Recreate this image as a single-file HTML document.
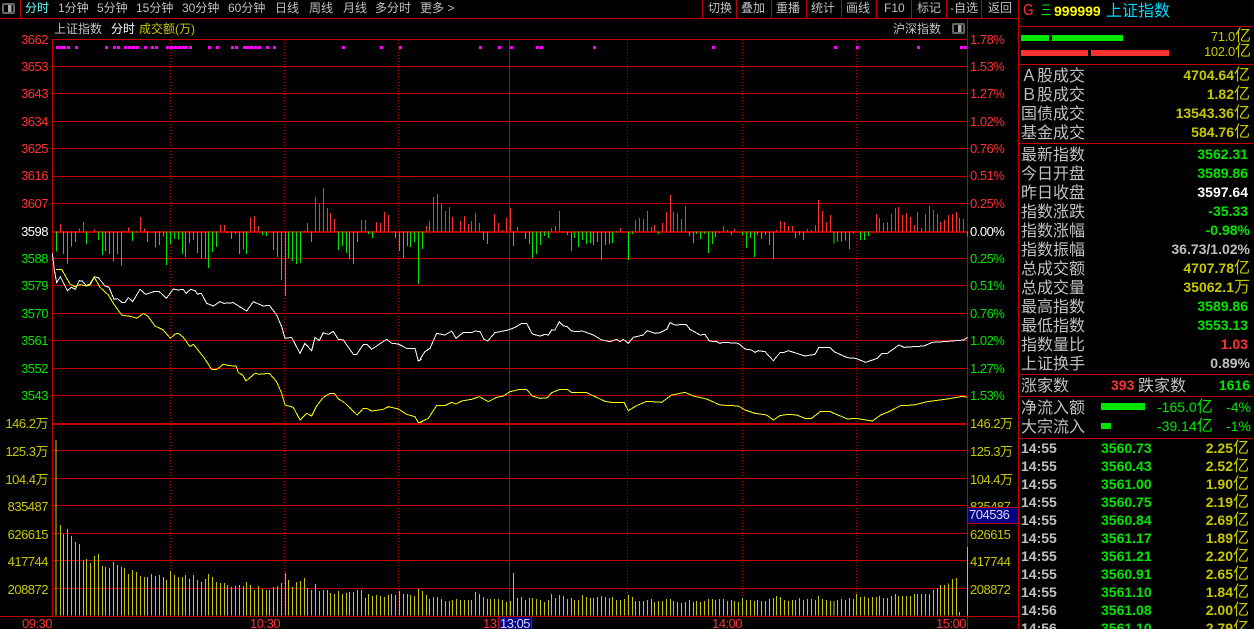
<!DOCTYPE html>
<html><head><meta charset="utf-8"><style>
html,body{margin:0;padding:0;background:#000;width:1254px;height:629px;overflow:hidden}
body{position:relative;font-family:"Liberation Sans","WenQuanYi Zen Hei","Noto Sans CJK SC",sans-serif;font-size:12px}
svg{position:absolute;left:0;top:0}
.t{position:absolute;white-space:nowrap;line-height:16px;height:16px}
.g{color:#c0c0c0}.r{color:#ff3232}.n{color:#00e600}.w{color:#fff}.o{color:#c8c800}
.l{font-size:16px;color:#c0c0c0;left:1021px;letter-spacing:0;margin-top:2px}
.v{font-size:14px;font-weight:bold;right:4px}
.v i{font-style:normal;font-weight:normal;font-size:16px}
.ax{left:0;width:48px;text-align:right;font-size:13px;letter-spacing:-.5px}
.ay{left:970px;font-size:13px;letter-spacing:-.5px}
.tm{font-size:13px;letter-spacing:-.5px}
.tk{font-size:14px;font-weight:bold;left:1021px;color:#c0c0c0}
.tp{font-size:14px;font-weight:bold;left:1101px;color:#00e600}
.tv{font-size:14px;font-weight:bold;right:5px;color:#c8c800}
.tv i{font-style:normal;font-weight:normal;font-size:16px}
.b{position:absolute}
.ic{position:absolute;width:9px;height:7px;border:2px solid #666;border-radius:2px;background:linear-gradient(90deg,#000 45%,#aaa 45%,#aaa 85%,#000 85%)}
</style></head><body>
<svg width="1254" height="629" viewBox="0 0 1254 629" shape-rendering="crispEdges" fill="none">
<path stroke="#c00000" d="M0 18.5H1018M52 39.5H967M52 66.5H967M52 93.5H967M52 121.5H967M52 148.5H967M52 176.5H967M52 203.5H967M52 258.5H967M52 285.5H967M52 313.5H967M52 340.5H967M52 368.5H967M52 395.5H967M52 450.5H967M52 478.5H967M52 505.5H967M52 533.5H967M52 560.5H967M52 588.5H967M0 616.5H1018M1018 26.5H1254M1018 64.5H1254M1018 143.5H1254M1018 374.5H1254M1018 396.5H1254M1018 438.5H1254"/>
<path stroke="#c00000" stroke-width="2" d="M52 232H967M52 424H967"/>
<path stroke="#c00000" d="M20.5 0V18M702.5 0V18M736.5 0V18M771.5 0V18M806.5 0V18M841.5 0V18M876.5 0V18M911.5 0V18M946.5 0V18M981.5 0V18M52.5 39V616M967.5 18V629M1018.5 0V629M509.5 39V616"/>
<path stroke="#c00000" stroke-dasharray="1 2" d="M170.5 40V616M284.5 40V616M398.5 40V616M627.5 40V616M742.5 40V616M856.5 40V616"/>
<path stroke="#f0f" stroke-width="3" d="M56 47.5h3M60 47.5h3M63 47.5h3M67 47.5h3M75 47.5h3M105 47.5h3M113 47.5h3M117 47.5h3M124 47.5h3M128 47.5h3M132 47.5h3M136 47.5h3M144 47.5h3M151 47.5h3M155 47.5h3M166 47.5h3M170 47.5h3M174 47.5h3M178 47.5h3M182 47.5h3M185 47.5h3M189 47.5h3M208 47.5h3M216 47.5h3M231 47.5h3M235 47.5h3M243 47.5h3M246 47.5h3M250 47.5h3M254 47.5h3M258 47.5h3M266 47.5h3M273 47.5h3M342 47.5h3M380 47.5h3M399 47.5h3M479 47.5h3M498 47.5h3M510 47.5h3M536 47.5h3M540 47.5h3M593 47.5h3M712 47.5h3M834 47.5h3M856 47.5h3M917 47.5h3M960 47.5h3M964 47.5h3"/>

<g transform="translate(0 200) scale(.33333)" stroke-width="3">
<path stroke="#ff3232" d="M181 95V72M238 95V85M250 95V66M283 95V88M373 95V92M385 95V82M421 95V51M433 95V85M661 95V75M673 95V75M751 95V54M763 95V48M775 95V78M913 95V91M922 95V69M946 95V-9M958 95V12M970 95V-36M982 95V24M991 95V39M1003 95V57M1084 95V60M1096 95V60M1129 95V66M1141 95V69M1153 95V36M1165 95V45"/>
<path stroke="#00e600" d="M169 95V155M190 95V162M202 95V192M214 95V140M226 95V126M259 95V132M295 95V120M307 95V165M316 95V153M328 95V162M340 95V185M352 95V162M364 95V197M397 95V123M409 95V98M442 95V126M466 95V143M478 95V135M490 95V110M499 95V195M511 95V132M523 95V115M535 95V118M547 95V162M556 95V171M568 95V129M580 95V120M592 95V159M604 95V177M616 95V175M626 95V204M637 95V156M649 95V141M683 95V98M695 95V117M706 95V102M718 95V162M730 95V147M739 95V162M787 95V105M799 95V108M820 95V150M832 95V171M844 95V240M856 95V288M865 95V174M877 95V183M889 95V192M901 95V189M934 95V126M1015 95V150M1027 95V138M1039 95V159M1048 95V177M1060 95V192M1072 95V126M1105 95V102M1117 95V114M1176 95V98M1187 95V114M1198 95V153M1210 95V174M1222 95V138M1231 95V141M1243 95V126M1255 95V252"/>
<polyline stroke="#fff" points="157,160 163,210 170,248 181,230 202,272 214,262 226,268 238,242 247,243 259,257 270,252 283,230 295,233 315,258 327,262 342,298 352,296 366,307 375,307 385,293 398,305 420,268 437,283 465,274 478,275 499,295 520,267 535,270 550,268 558,280 572,268 585,272 592,282 604,280 620,310 640,318 660,305 672,310 700,308 740,333 760,305 790,318 808,316 830,345 845,380 855,415 875,412 900,460 915,430 935,452 945,412 958,422 970,398 985,403 1000,394 1015,418 1030,420 1060,463 1070,463 1090,433 1100,433 1115,448 1160,418 1175,430 1195,432 1220,445 1245,445 1255,483 1265,478"/>
<polyline stroke="#ff0" points="168,208 185,208 210,252 225,260 240,254 260,258 270,255 283,232 300,262 325,285 340,310 365,345 395,350 410,355 430,340 445,350 465,378 490,390 511,415 525,402 535,400 550,412 570,440 580,433 610,470 635,508 650,508 670,493 690,497 708,498 715,518 728,525 738,543 765,520 778,523 808,520 830,545 845,580 855,615 880,622 900,660 920,640 935,648 950,618 970,592 990,580 1003,580 1015,597 1030,605 1072,645 1090,625 1100,625 1115,633 1150,628 1165,620 1195,627 1220,643 1245,650 1255,668 1265,667"/>
</g>

<g transform="translate(420 200) scale(.33333)" stroke-width="3">
<path stroke="#ff3232" d="M19 95V78M28 95V63M40 95V-9M52 95V-18M64 95V12M76 95V33M88 95V21M97 95V51M121 95V63M133 95V48M145 95V72M154 95V63M166 95V39M178 95V69M223 95V42M235 95V69M247 95V90M259 95V54M271 95V24M292 95V81M394 95V84M406 95V78M418 95V33M601 95V84M646 95V60M658 95V54M670 95V57M682 95V33M694 95V81M703 95V75M727 95V69M739 95V36M751 95V-15M760 95V36M772 95V39M784 95V57M796 95V18M910 95V78M922 95V90M943 95V87M1069 95V90M1081 95V63M1093 95V66M1105 95V78M1117 95V78M1162 95V87M1174 95V90M1186 95V75M1195 95V0M1207 95V33M1219 95V66M1231 95V45"/>
<path stroke="#00e600" d="M7 95V147M190 95V120M202 95V132M281 95V138M304 95V98M316 95V117M328 95V132M338 95V174M349 95V162M361 95V135M373 95V108M385 95V114M430 95V98M442 95V105M454 95V153M463 95V114M475 95V141M487 95V120M499 95V132M511 95V129M520 95V135M532 95V126M544 95V180M556 95V135M568 95V132M577 95V129M589 95V98M625 95V180M637 95V102M715 95V102M808 95V108M820 95V129M829 95V102M841 95V117M853 95V102M865 95V159M877 95V132M886 95V111M898 95V98M934 95V105M967 95V105M979 95V144M991 95V114M1003 95V171M1012 95V105M1024 95V117M1036 95V105M1048 95V135M1060 95V177M1126 95V114M1138 95V105M1150 95V120"/>
<polyline stroke="#fff" points="0,478 15,455 30,445 50,400 75,405 95,393 108,415 130,397 155,398 165,393 180,395 192,418 203,423 225,398 245,394 265,390 285,382 305,370 320,370 337,402 360,408 375,403 385,405 395,390 405,390 418,365 430,378 442,380 455,393 470,395 487,393 520,405 545,420 570,425 590,418 600,425 610,418 625,430 640,412 670,405 682,392 705,400 720,398 740,388 750,368 765,375 798,373 810,388 840,405 855,403 868,423 890,425 900,430 910,427 955,430 975,447 995,450 1005,457 1015,452 1035,455 1060,482 1080,458 1090,458 1105,452 1155,468 1185,463 1197,442 1230,442 1242,455"/>
<polyline stroke="#ff0" points="0,667 25,655 50,617 75,617 95,607 108,612 125,603 155,598 178,590 205,605 230,592 250,588 270,575 300,568 320,568 337,588 360,595 382,593 395,578 420,568 442,568 455,578 500,578 540,597 555,604 580,608 612,607 625,632 650,617 680,604 725,607 755,585 795,577 820,588 860,597 900,615 955,618 975,630 1005,640 1040,645 1060,660 1080,647 1105,643 1130,645 1155,655 1175,655 1200,635 1230,634 1242,640"/>
</g>

<g transform="translate(834 200) scale(.33333)" stroke-width="3">
<path stroke="#00e600" d="M0 95V130M10 95V125M22 95V125M34 95V122M46 95V147M58 95V100M79 95V120M91 95V120M103 95V108M400 95V110"/>
<path stroke="#ff3232" d="M127 95V42M136 95V54M148 95V69M160 95V66M172 95V42M184 95V24M193 95V21M205 95V45M217 95V39M229 95V51M241 95V75M250 95V36M262 95V84M274 95V42M286 95V18M298 95V30M310 95V42M319 95V66M331 95V60M343 95V45M355 95V42M367 95V36M376 95V54M388 95V57"/>
<polyline stroke="#fff" points="0,455 40,473 65,475 95,487 130,475 145,460 160,460 195,435 210,442 270,438 295,427 330,425 390,420 400,412"/>
<polyline stroke="#ff0" points="0,640 40,657 65,655 115,663 140,645 165,635 200,617 240,615 280,605 340,597 385,589 400,592"/>
</g>

<g transform="translate(0 420) scale(.33333)" stroke-width="3" stroke="#c8c800">
<path d="M168 587V60M181 587V315M190 587V342M202 587V327M214 587V348M226 587V366M238 587V372M250 587V421M259 587V417M271 587V429M283 587V408M295 587V402M307 587V438M316 587V441M328 587V444M340 587V426M352 587V435M364 587V441M373 587V444M385 587V462M397 587V450M409 587V456M421 587V468M433 587V471M442 587V471M454 587V462M466 587V468M478 587V465M490 587V471M499 587V480M511 587V453M523 587V465M535 587V471M547 587V471M556 587V465M568 587V477M580 587V465M592 587V480M604 587V486M616 587V477M626 587V462M637 587V471M649 587V486M661 587V489M673 587V489M683 587V495M695 587V501M706 587V498M718 587V495M730 587V498M739 587V486M751 587V495M763 587V510M775 587V498M787 587V507M799 587V510M808 587V510M820 587V501M832 587V498M844 587V489M856 587V459M865 587V480M877 587V501M889 587V486M901 587V483M913 587V474M922 587V504M934 587V510M946 587V492M958 587V513M970 587V510M982 587V510M991 587V519M1003 587V522M1015 587V513M1027 587V522M1039 587V519M1048 587V516M1060 587V516M1072 587V510M1084 587V510M1096 587V534M1105 587V522M1117 587V528M1129 587V525M1141 587V528M1153 587V531M1165 587V525M1174 587V522M1186 587V525M1198 587V513M1210 587V522M1222 587V522M1231 587V525M1243 587V528M1255 587V507"/>
</g>
<g transform="translate(420 420) scale(.33333)" stroke-width="3" stroke="#c8c800">
<path d="M7 587V513M19 587V525M28 587V537M40 587V531M52 587V531M64 587V537M76 587V543M88 587V543M97 587V540M109 587V537M121 587V540M133 587V540M145 587V540M154 587V540M166 587V516M178 587V522M190 587V531M202 587V537M211 587V537M223 587V537M235 587V537M247 587V540M259 587V546M271 587V543M281 587V459M292 587V534M304 587V531M316 587V540M328 587V534M338 587V534M349 587V537M361 587V540M373 587V546M385 587V540M394 587V522M406 587V534M418 587V525M430 587V528M442 587V537M454 587V534M463 587V540M475 587V540M487 587V525M499 587V531M511 587V534M520 587V534M532 587V531M544 587V528M556 587V531M568 587V534M577 587V531M589 587V540M601 587V540M613 587V537M625 587V525M637 587V531M646 587V543M658 587V543M670 587V543M682 587V540M694 587V537M703 587V546M715 587V543M727 587V543M739 587V537M751 587V537M760 587V543M772 587V546M784 587V549M796 587V546M808 587V540M820 587V546M829 587V543M841 587V546M853 587V543M865 587V537M877 587V537M886 587V540M898 587V537M910 587V537M922 587V543M934 587V540M943 587V543M955 587V546M967 587V534M979 587V540M991 587V540M1003 587V543M1012 587V540M1024 587V543M1036 587V543M1048 587V537M1060 587V534M1069 587V528M1081 587V531M1093 587V540M1105 587V543M1117 587V540M1126 587V540M1138 587V534M1150 587V540M1162 587V537M1174 587V537M1186 587V540M1195 587V528M1207 587V537M1219 587V540M1231 587V543"/>
</g>
<g transform="translate(834 420) scale(.33333)" stroke-width="3" stroke="#c8c800">
<path d="M0 587V543M10 587V540M22 587V537M34 587V540M46 587V534M58 587V537M67 587V522M79 587V531M91 587V529M103 587V534M115 587V531M127 587V531M136 587V528M148 587V534M160 587V534M172 587V528M184 587V522M193 587V528M205 587V528M217 587V528M229 587V528M241 587V522M250 587V522M262 587V522M274 587V522M286 587V522M298 587V510M310 587V504M319 587V495M331 587V495M343 587V490M355 587V477M367 587V474M376 587V576M400 587V381"/>
</g>
</svg>

<div class="ic" style="left:2px;top:3px"></div>
<div class="ic" style="left:952px;top:23px"></div>

<!-- toolbar -->
<span class="t" style="left:25px;top:0;color:#64ffff">分时</span>
<span class="t g" style="left:58px;top:0">1分钟</span>
<span class="t g" style="left:97px;top:0">5分钟</span>
<span class="t g" style="left:136px;top:0">15分钟</span>
<span class="t g" style="left:182px;top:0">30分钟</span>
<span class="t g" style="left:228px;top:0">60分钟</span>
<span class="t g" style="left:275px;top:0">日线</span>
<span class="t g" style="left:309px;top:0">周线</span>
<span class="t g" style="left:343px;top:0">月线</span>
<span class="t g" style="left:375px;top:0">多分时</span>
<span class="t g" style="left:420px;top:0">更多 &gt;</span>
<span class="t g" style="left:708px;top:0">切换</span>
<span class="t g" style="left:741px;top:0">叠加</span>
<span class="t g" style="left:776px;top:0">重播</span>
<span class="t g" style="left:811px;top:0">统计</span>
<span class="t g" style="left:846px;top:0">画线</span>
<span class="t g" style="left:884px;top:0">F10</span>
<span class="t g" style="left:917px;top:0">标记</span>
<span class="t g" style="left:950px;top:0">-自选</span>
<span class="t g" style="left:988px;top:0">返回</span>

<span class="t g" style="left:54px;top:21px">上证指数</span>
<span class="t w" style="left:111px;top:21px">分时</span>
<span class="t o" style="left:139px;top:21px">成交额(万)</span>
<span class="t g" style="left:893px;top:21px">沪深指数</span>

<!-- left axis -->
<span class="t ax r" style="top:32px">3662</span>
<span class="t ax r" style="top:59px">3653</span>
<span class="t ax r" style="top:86px">3643</span>
<span class="t ax r" style="top:114px">3634</span>
<span class="t ax r" style="top:141px">3625</span>
<span class="t ax r" style="top:168px">3616</span>
<span class="t ax r" style="top:196px">3607</span>
<span class="t ax w" style="top:224px">3598</span>
<span class="t ax n" style="top:251px">3588</span>
<span class="t ax n" style="top:278px">3579</span>
<span class="t ax n" style="top:306px">3570</span>
<span class="t ax n" style="top:333px">3561</span>
<span class="t ax n" style="top:361px">3552</span>
<span class="t ax n" style="top:388px">3543</span>
<span class="t ax o" style="top:416px">146.2万</span>
<span class="t ax o" style="top:444px">125.3万</span>
<span class="t ax o" style="top:472px">104.4万</span>
<span class="t ax o" style="top:499px">835487</span>
<span class="t ax o" style="top:527px">626615</span>
<span class="t ax o" style="top:554px">417744</span>
<span class="t ax o" style="top:582px">208872</span>

<!-- right axis -->
<span class="t ay r" style="top:32px">1.78%</span>
<span class="t ay r" style="top:59px">1.53%</span>
<span class="t ay r" style="top:86px">1.27%</span>
<span class="t ay r" style="top:114px">1.02%</span>
<span class="t ay r" style="top:141px">0.76%</span>
<span class="t ay r" style="top:168px">0.51%</span>
<span class="t ay r" style="top:196px">0.25%</span>
<span class="t ay w" style="top:224px">0.00%</span>
<span class="t ay n" style="top:251px">0.25%</span>
<span class="t ay n" style="top:278px">0.51%</span>
<span class="t ay n" style="top:306px">0.76%</span>
<span class="t ay n" style="top:333px">1.02%</span>
<span class="t ay n" style="top:361px">1.27%</span>
<span class="t ay n" style="top:388px">1.53%</span>
<span class="t ay o" style="top:416px">146.2万</span>
<span class="t ay o" style="top:444px">125.3万</span>
<span class="t ay o" style="top:472px">104.4万</span>
<span class="t ay o" style="top:499px">835487</span>
<div class="b" style="left:968px;top:507px;width:50px;height:15px;background:#000080;border-top:1px solid #c00000;border-bottom:1px solid #c00000"></div>
<span class="t tm" style="left:969px;top:507px;color:#d8d8ff">704536</span>
<span class="t ay o" style="top:527px">626615</span>
<span class="t ay o" style="top:554px">417744</span>
<span class="t ay o" style="top:582px">208872</span>

<!-- time axis -->
<span class="t r tm" style="left:22px;top:616px">09:30</span>
<span class="t r tm" style="left:250px;top:616px">10:30</span>
<span class="t r tm" style="left:483px;top:616px">13:</span>
<div class="b" style="left:498px;top:617px;width:32px;height:12px;background:#000080;border-left:1px solid #c00000;border-right:1px solid #c00000"></div>
<span class="t tm" style="left:500px;top:616px;color:#d8d8ff">13:05</span>
<span class="t r tm" style="left:712px;top:616px">14:00</span>
<span class="t r tm" style="left:936px;top:616px">15:00</span>

<!-- right panel header -->
<span class="t r" style="left:1023px;top:3px;font-size:16px;transform:scaleX(.85);transform-origin:left">G</span>
<span class="t n" style="left:1041px;top:4px;font-size:10px;transform:scaleY(1.4)">三</span>
<span class="t" style="left:1054px;top:3px;font-size:14px;font-weight:bold;color:#ff0">999999</span>
<span class="t" style="left:1106px;top:4px;font-size:16px;color:#00d8ff">上证指数</span>
<div class="b" style="left:1021px;top:35px;width:28px;height:6px;background:#00e600"></div>
<div class="b" style="left:1052px;top:35px;width:71px;height:6px;background:#00e600"></div>
<div class="b" style="left:1021px;top:50px;width:67px;height:6px;background:#ff3232"></div>
<div class="b" style="left:1091px;top:50px;width:78px;height:6px;background:#ff3232"></div>
<span class="t o" style="right:3px;top:29px;font-size:13px;letter-spacing:-.3px">71.0<span style="font-size:16px;letter-spacing:0">亿</span></span>
<span class="t o" style="right:3px;top:44px;font-size:13px;letter-spacing:-.3px">102.0<span style="font-size:16px;letter-spacing:0">亿</span></span>

<span class="t l" style="top:67px">Ａ股成交</span><span class="t v o" style="top:67px">4704.64<i>亿</i></span>
<span class="t l" style="top:86px">Ｂ股成交</span><span class="t v o" style="top:86px">1.82<i>亿</i></span>
<span class="t l" style="top:105px">国债成交</span><span class="t v o" style="top:105px">13543.36<i>亿</i></span>
<span class="t l" style="top:124px">基金成交</span><span class="t v o" style="top:124px">584.76<i>亿</i></span>
<span class="t l" style="top:146px">最新指数</span><span class="t v n" style="top:146px;right:6px">3562.31</span>
<span class="t l" style="top:165px">今日开盘</span><span class="t v n" style="top:165px;right:6px">3589.86</span>
<span class="t l" style="top:184px">昨日收盘</span><span class="t v w" style="top:184px;right:6px">3597.64</span>
<span class="t l" style="top:203px">指数涨跌</span><span class="t v n" style="top:203px;right:6px">-35.33</span>
<span class="t l" style="top:222px">指数涨幅</span><span class="t v n" style="top:222px">-0.98%</span>
<span class="t l" style="top:241px">指数振幅</span><span class="t v g" style="top:241px">36.73/1.02%</span>
<span class="t l" style="top:260px">总成交额</span><span class="t v o" style="top:260px">4707.78<i>亿</i></span>
<span class="t l" style="top:279px">总成交量</span><span class="t v o" style="top:279px">35062.1<i>万</i></span>
<span class="t l" style="top:298px">最高指数</span><span class="t v n" style="top:298px;right:6px">3589.86</span>
<span class="t l" style="top:317px">最低指数</span><span class="t v n" style="top:317px;right:6px">3553.13</span>
<span class="t l" style="top:336px">指数量比</span><span class="t v r" style="top:336px;right:6px">1.03</span>
<span class="t l" style="top:355px">上证换手</span><span class="t v g" style="top:355px">0.89%</span>

<span class="t l" style="top:377px">涨家数</span>
<span class="t r" style="left:1111px;top:377px;font-size:14px;font-weight:bold">393</span>
<span class="t l" style="top:377px;left:1138px">跌家数</span>
<span class="t n" style="right:4px;top:377px;font-size:14px;font-weight:bold">1616</span>

<span class="t l" style="top:399px">净流入额</span>
<div class="b" style="left:1101px;top:403px;width:44px;height:7px;background:#00e600"></div>
<span class="t n" style="left:1157px;top:399px;font-size:14px">-165.0<span style="font-size:16px">亿</span></span>
<span class="t n" style="right:3px;top:399px;font-size:14px">-4%</span>
<span class="t l" style="top:418px">大宗流入</span>
<div class="b" style="left:1101px;top:423px;width:10px;height:6px;background:#00e600"></div>
<span class="t n" style="left:1157px;top:418px;font-size:14px">-39.14<span style="font-size:16px">亿</span></span>
<span class="t n" style="right:3px;top:418px;font-size:14px">-1%</span>

<span class="t tk" style="top:440px">14:55</span><span class="t tp" style="top:440px">3560.73</span><span class="t tv" style="top:440px">2.25<i>亿</i></span>
<span class="t tk" style="top:458px">14:55</span><span class="t tp" style="top:458px">3560.43</span><span class="t tv" style="top:458px">2.52<i>亿</i></span>
<span class="t tk" style="top:476px">14:55</span><span class="t tp" style="top:476px">3561.00</span><span class="t tv" style="top:476px">1.90<i>亿</i></span>
<span class="t tk" style="top:494px">14:55</span><span class="t tp" style="top:494px">3560.75</span><span class="t tv" style="top:494px">2.19<i>亿</i></span>
<span class="t tk" style="top:512px">14:55</span><span class="t tp" style="top:512px">3560.84</span><span class="t tv" style="top:512px">2.69<i>亿</i></span>
<span class="t tk" style="top:530px">14:55</span><span class="t tp" style="top:530px">3561.17</span><span class="t tv" style="top:530px">1.89<i>亿</i></span>
<span class="t tk" style="top:548px">14:55</span><span class="t tp" style="top:548px">3561.21</span><span class="t tv" style="top:548px">2.20<i>亿</i></span>
<span class="t tk" style="top:566px">14:55</span><span class="t tp" style="top:566px">3560.91</span><span class="t tv" style="top:566px">2.65<i>亿</i></span>
<span class="t tk" style="top:584px">14:55</span><span class="t tp" style="top:584px">3561.10</span><span class="t tv" style="top:584px">1.84<i>亿</i></span>
<span class="t tk" style="top:602px">14:56</span><span class="t tp" style="top:602px">3561.08</span><span class="t tv" style="top:602px">2.00<i>亿</i></span>
<span class="t tk" style="top:620px">14:56</span><span class="t tp" style="top:620px">3561.10</span><span class="t tv" style="top:620px">2.79<i>亿</i></span>
</body></html>
